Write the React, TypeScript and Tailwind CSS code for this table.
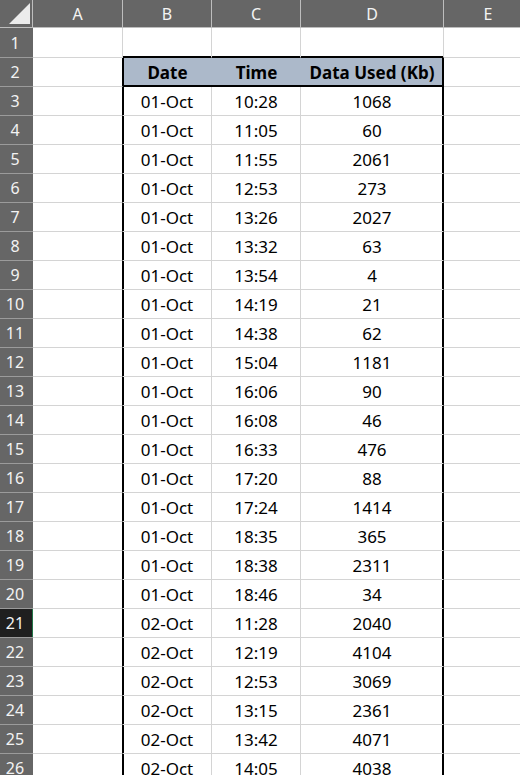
import React from "react";

/**
 * Spreadsheet view - data usage log in a dark-header Excel style grid.
 * Columns A-E, rows 1-27, table sits in B2:D (black outline, blue-gray header).
 */

const rows: Array<[string, string, string]> = [
    ["01-Oct", "10:28", "1068"],
    ["01-Oct", "11:05", "60"],
    ["01-Oct", "11:55", "2061"],
    ["01-Oct", "12:53", "273"],
    ["01-Oct", "13:26", "2027"],
    ["01-Oct", "13:32", "63"],
    ["01-Oct", "13:54", "4"],
    ["01-Oct", "14:19", "21"],
    ["01-Oct", "14:38", "62"],
    ["01-Oct", "15:04", "1181"],
    ["01-Oct", "16:06", "90"],
    ["01-Oct", "16:08", "46"],
    ["01-Oct", "16:33", "476"],
    ["01-Oct", "17:20", "88"],
    ["01-Oct", "17:24", "1414"],
    ["01-Oct", "18:35", "365"],
    ["01-Oct", "18:38", "2311"],
    ["01-Oct", "18:46", "34"],
    ["02-Oct", "11:28", "2040"],
    ["02-Oct", "12:19", "4104"],
    ["02-Oct", "12:53", "3069"],
    ["02-Oct", "13:15", "2361"],
    ["02-Oct", "13:42", "4071"],
    ["02-Oct", "14:05", "4038"],
];

const font = "font-['Noto_Sans',sans-serif]";

function RowHeader({ n, selected }: { n: number; selected?: boolean }) {
    return (
        <div
            className={`w-[33px] shrink-0 flex items-center justify-center pr-[3px] text-[16px] font-normal text-[#f3f3f3] border-b border-[#9b9b9b] ${
                selected ? "bg-[#1f1f1f] shadow-[inset_-1px_0_0_#217346]" : "bg-[#666666]"
            }`}
        >
            {n}
        </div>
    );
}

export default function App() {
    return (
        <div className={`w-[520px] h-[775px] overflow-hidden bg-white ${font}`}>
            {/* Column headers */}
            <div className="flex h-[28px] bg-[#666666] border-b border-[#bdbdbd] text-[16px] text-[#f3f3f3]">
                <div className="w-[33px] shrink-0 border-r border-[#bdbdbd]">
                    <svg width="32" height="27" viewBox="0 0 32 27">
                        <polygon points="30,3 30,24 9,24" fill="#ececec" />
                    </svg>
                </div>
                <div className="w-[90px] shrink-0 border-r border-[#bdbdbd] flex items-center justify-center">A</div>
                <div className="w-[89px] shrink-0 border-r border-[#bdbdbd] flex items-center justify-center">B</div>
                <div className="w-[89px] shrink-0 border-r border-[#bdbdbd] flex items-center justify-center">C</div>
                <div className="w-[143px] shrink-0 border-r border-[#bdbdbd] flex items-center justify-center">D</div>
                <div className="w-[88px] shrink-0 flex items-center justify-center">E</div>
            </div>

            {/* Row 1 */}
            <div className="flex h-[30px]">
                <RowHeader n={1} />
                <div className="w-[90px] shrink-0 border-r border-b border-[#d4d4d4]" />
                <div className="w-[89px] shrink-0 border-r border-r-[#d4d4d4] border-b border-b-black shadow-[inset_0_-1px_0_#000]" />
                <div className="w-[89px] shrink-0 border-r border-r-[#d4d4d4] border-b border-b-black shadow-[inset_0_-1px_0_#000]" />
                <div className="w-[143px] shrink-0 border-r border-r-[#d4d4d4] border-b border-b-black shadow-[inset_0_-1px_0_#000]" />
                <div className="flex-1 border-b border-[#d4d4d4]" />
            </div>

            {/* Row 2 - table header */}
            <div className="flex h-[29px] text-[17px] font-bold text-black">
                <RowHeader n={2} />
                <div className="w-[90px] shrink-0 border-r border-r-black border-b border-b-[#d4d4d4]" />
                <div className="w-[89px] shrink-0 bg-[#acb9ca] border-b border-black shadow-[inset_1px_-1px_0_#000] flex items-center justify-center pt-[1px]">
                    Date
                </div>
                <div className="w-[89px] shrink-0 bg-[#acb9ca] border-b border-black shadow-[inset_0_-1px_0_#000] flex items-center justify-center pt-[1px]">
                    Time
                </div>
                <div className="w-[143px] shrink-0 bg-[#acb9ca] border-r border-b border-black shadow-[inset_-1px_-1px_0_#000] flex items-center justify-center pt-[1px]">
                    Data Used (Kb)
                </div>
                <div className="flex-1 border-b border-[#d4d4d4]" />
            </div>

            {/* Data rows */}
            {rows.map(([date, time, kb], i) => (
                <div key={i} className="flex h-[29px] text-[17px] text-black">
                    <RowHeader n={i + 3} selected={i + 3 === 21} />
                    <div className="w-[90px] shrink-0 border-r border-r-black border-b border-b-[#d4d4d4]" />
                    <div className="w-[89px] shrink-0 border-r border-b border-[#d4d4d4] shadow-[inset_1px_0_0_#000] flex items-center justify-center pt-[1px]">
                        {date}
                    </div>
                    <div className="w-[89px] shrink-0 border-r border-b border-[#d4d4d4] flex items-center justify-center pt-[1px]">
                        {time}
                    </div>
                    <div className="w-[143px] shrink-0 border-r border-r-black border-b border-b-[#d4d4d4] shadow-[inset_-1px_0_0_#000] flex items-center justify-center pt-[1px]">
                        {kb}
                    </div>
                    <div className="flex-1 border-b border-[#d4d4d4]" />
                </div>
            ))}
        </div>
    );
}
